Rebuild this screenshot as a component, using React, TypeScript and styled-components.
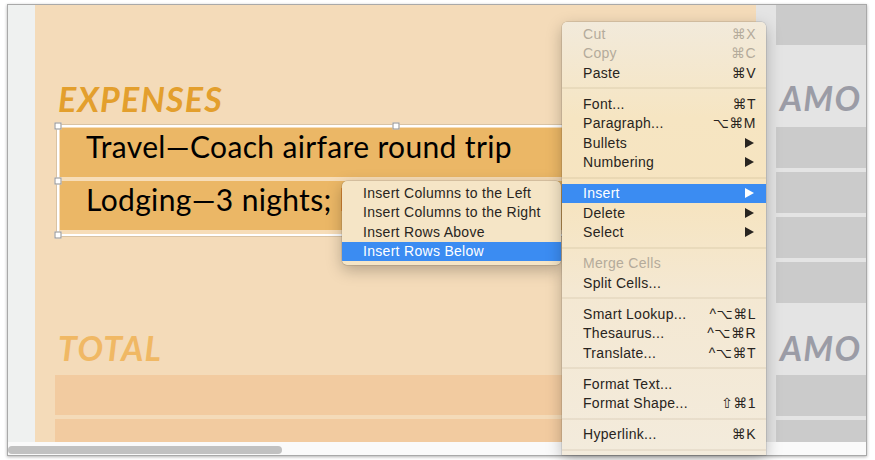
import React from "react";
import styled, { createGlobalStyle } from "styled-components";

const Global = createGlobalStyle`
  html, body { margin: 0; padding: 0; background: #ffffff; }
  body { font-family: "Liberation Sans", Arial, sans-serif; }
  * { box-sizing: border-box; }
`;

const Page = styled.div`
  position: relative;
  width: 875px;
  height: 460px;
  overflow: hidden;
  padding: 4px 0 0 7px;
  background: #ffffff;
`;

const Window = styled.div`
  width: 860px;
  height: 452px;
  border: 1px solid #a9a9a9;
  box-shadow: 0 1px 3px rgba(0, 0, 0, 0.3);
  display: flex;
  flex-direction: column;
  background: #fafafa;
  overflow: hidden;
`;

const Workspace = styled.div`
  height: 437px;
  flex: none;
  display: flex;
`;

const Gutter = styled.div`
  width: 27px;
  flex: none;
  background: #eff1f0;
`;

const Slide = styled.div`
  width: 721px;
  flex: none;
  background: #f4dbb9;
  overflow: hidden;
  display: flex;
  flex-direction: column;
  padding-top: 77px;
`;

const SectionTitle = styled.div<{ $tone: string; $indent: number; $top?: number }>`
  font-family: Lato, "Open Sans", sans-serif;
  font-weight: 700;
  font-style: italic;
  font-size: 34px;
  line-height: 34px;
  letter-spacing: 1.2px;
  height: 34px;
  flex: none;
  color: ${(p) => p.$tone};
  margin-left: ${(p) => p.$indent}px;
  margin-top: ${(p) => p.$top ?? 0}px;
  white-space: nowrap;
`;

const SelectedTable = styled.div`
  position: relative;
  flex: none;
  margin: 9px 0 0 22px;
  width: 678px;
  border: 2px solid #ffffff;
  box-shadow: 0 0 0 0.5px rgba(0, 0, 0, 0.22);
  padding: 1px 1px 4px 1px;
  display: flex;
  flex-direction: column;
  gap: 4px;
  background: #f7ddb8;
`;

const ExpenseRow = styled.div`
  height: 49px;
  flex: none;
  background: #ebb766;
  font-family: Lato, "Open Sans", sans-serif;
  font-size: 30px;
  line-height: 36px;
  letter-spacing: 0.35px;
  color: #000000;
  padding-left: 26px;
  white-space: nowrap;
  overflow: hidden;
`;

const Handle = styled.span<{ $h: "start" | "mid" | "end"; $v: "start" | "mid" | "end" }>`
  position: absolute;
  width: 7px;
  height: 7px;
  background: #ffffff;
  border: 1px solid #8f8f8f;
  transform: translate(-50%, -50%);
  left: ${(p) => (p.$h === "start" ? "-1px" : p.$h === "mid" ? "50%" : "calc(100% + 1px)")};
  top: ${(p) => (p.$v === "start" ? "-1px" : p.$v === "mid" ? "50%" : "calc(100% + 1px)")};
`;

const TotalTable = styled.div`
  flex: none;
  margin: 10px 0 0 20px;
  width: 680px;
  display: flex;
  flex-direction: column;
  gap: 4px;
`;

const TotalRow = styled.div`
  height: 40px;
  flex: none;
  background: #f2cba0;
`;

const GapStrip = styled.div`
  width: 20px;
  flex: none;
  background: #e4e4e4;
`;

const NextSlide = styled.div`
  flex: 1;
  background: #e4e4e4;
  display: flex;
  flex-direction: column;
  overflow: hidden;
`;

const Slab = styled.div<{ $h: number }>`
  height: ${(p) => p.$h}px;
  flex: none;
  background: #cbcbcb;
`;

const SlabGroup = styled.div`
  flex: none;
  display: flex;
  flex-direction: column;
  gap: 4px;
`;

const Band = styled.div<{ $h: number; $pt: number }>`
  height: ${(p) => p.$h}px;
  padding-top: ${(p) => p.$pt}px;
  flex: none;
  overflow: hidden;
`;

const HScroll = styled.div`
  height: 13px;
  flex: none;
  background: #fafafa;
  padding-top: 4px;
`;

const Thumb = styled.div`
  width: 274px;
  height: 8px;
  border-radius: 4px;
  background: #c1c1c1;
`;

const Menu = styled.div`
  position: absolute;
  left: 562px;
  top: 22px;
  width: 204px;
  height: 433px;
  padding-top: 2px;
  border-radius: 5px 5px 0 0;
  background: linear-gradient(
    180deg,
    #f2eadb 0%,
    #f6e5c2 22%,
    #f6e4c0 42%,
    #f4e8d2 62%,
    #f3ebdc 100%
  );
  box-shadow: 0 0 0 0.5px rgba(0, 0, 0, 0.18), 0 5px 16px rgba(0, 0, 0, 0.26);
  overflow: hidden;
  font-family: "Liberation Sans", "DejaVu Sans", sans-serif;
  font-size: 14px;
`;

const SubMenu = styled(Menu)`
  left: 342px;
  top: 181px;
  width: 219px;
  height: 84px;
  border-radius: 5px;
  background: #f5e5c6;
`;

const Item = styled.div<{ $active?: boolean; $disabled?: boolean }>`
  height: 19.5px;
  display: flex;
  align-items: center;
  justify-content: space-between;
  padding: 0 10px 0 21px;
  white-space: nowrap;
  letter-spacing: 0.3px;
  color: ${(p) => (p.$active ? "#ffffff" : p.$disabled ? "#b4ab9b" : "#282420")};
  background: ${(p) => (p.$active ? "#3b8cf2" : "transparent")};
`;

const Separator = styled.div`
  height: 11.5px;
  display: flex;
  align-items: center;
  &::after {
    content: "";
    flex: 1;
    height: 2px;
    background: rgba(120, 95, 50, 0.09);
  }
`;

const Shortcut = styled.span`
  font-family: "Liberation Sans", "DejaVu Sans", sans-serif;
  letter-spacing: 0.5px;
`;

const ArrowIcon = styled.svg`
  width: 9px;
  height: 10px;
  margin-right: 2px;
  fill: currentColor;
`;

const Arrow = () => (
  <ArrowIcon viewBox="0 0 9 10">
    <polygon points="0,0 9,5 0,10" />
  </ArrowIcon>
);

type Entry =
  | { sep: true }
  | { label: string; key?: string; sub?: boolean; disabled?: boolean; active?: boolean };

const entries: Entry[] = [
  { label: "Cut", key: "⌘X", disabled: true },
  { label: "Copy", key: "⌘C", disabled: true },
  { label: "Paste", key: "⌘V" },
  { sep: true },
  { label: "Font...", key: "⌘T" },
  { label: "Paragraph...", key: "⌥⌘M" },
  { label: "Bullets", sub: true },
  { label: "Numbering", sub: true },
  { sep: true },
  { label: "Insert", sub: true, active: true },
  { label: "Delete", sub: true },
  { label: "Select", sub: true },
  { sep: true },
  { label: "Merge Cells", disabled: true },
  { label: "Split Cells..." },
  { sep: true },
  { label: "Smart Lookup...", key: "^⌥⌘L" },
  { label: "Thesaurus...", key: "^⌥⌘R" },
  { label: "Translate...", key: "^⌥⌘T" },
  { sep: true },
  { label: "Format Text..." },
  { label: "Format Shape...", key: "⇧⌘1" },
  { sep: true },
  { label: "Hyperlink...", key: "⌘K" },
  { sep: true },
];

const subEntries = [
  "Insert Columns to the Left",
  "Insert Columns to the Right",
  "Insert Rows Above",
  "Insert Rows Below",
];

export default function App() {
  return (
    <>
      <Global />
      <Page>
        <Window>
          <Workspace>
            <Gutter />
            <Slide>
              <SectionTitle $tone="#e39f2d" $indent={23}>
                EXPENSES
              </SectionTitle>
              <SelectedTable>
                <ExpenseRow>Travel—Coach airfare round trip</ExpenseRow>
                <ExpenseRow>Lodging—3 nights; hotel and meals</ExpenseRow>
                <Handle $h="start" $v="start" />
                <Handle $h="mid" $v="start" />
                <Handle $h="end" $v="start" />
                <Handle $h="start" $v="mid" />
                <Handle $h="end" $v="mid" />
                <Handle $h="start" $v="end" />
                <Handle $h="mid" $v="end" />
                <Handle $h="end" $v="end" />
              </SelectedTable>
              <SectionTitle $tone="#f0b864" $indent={23} $top={95}>
                TOTAL
              </SectionTitle>
              <TotalTable>
                <TotalRow />
                <TotalRow />
              </TotalTable>
            </Slide>
            <GapStrip />
            <NextSlide>
              <Slab $h={40} />
              <Band $h={82} $pt={36}>
                <SectionTitle $tone="#9b9ca6" $indent={4}>
                  AMO
                </SectionTitle>
              </Band>
              <SlabGroup>
                <Slab $h={41} />
                <Slab $h={41} />
                <Slab $h={41} />
                <Slab $h={41} />
              </SlabGroup>
              <Band $h={72} $pt={28}>
                <SectionTitle $tone="#9b9ca6" $indent={4}>
                  AMO
                </SectionTitle>
              </Band>
              <SlabGroup>
                <Slab $h={41} />
                <Slab $h={41} />
              </SlabGroup>
            </NextSlide>
          </Workspace>
          <HScroll>
            <Thumb />
          </HScroll>
        </Window>

        <SubMenu>
          {subEntries.map((s, i) => (
            <Item key={s} $active={i === 3}>
              {s}
            </Item>
          ))}
        </SubMenu>

        <Menu>
          {entries.map((e, i) =>
            "sep" in e ? (
              <Separator key={i} />
            ) : (
              <Item key={i} $active={e.active} $disabled={e.disabled}>
                <span>{e.label}</span>
                {e.sub ? <Arrow /> : e.key ? <Shortcut>{e.key}</Shortcut> : null}
              </Item>
            )
          )}
        </Menu>
      </Page>
    </>
  );
}
